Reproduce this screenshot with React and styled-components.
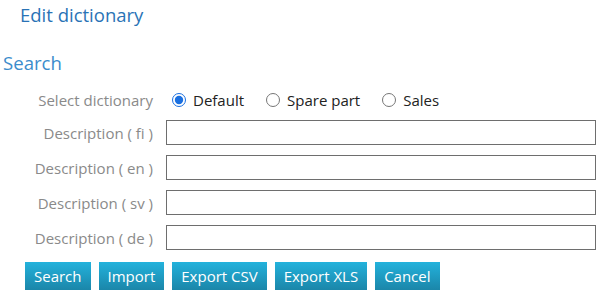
import React from "react";
import styled, { createGlobalStyle } from "styled-components";

const Global = createGlobalStyle`
  html, body { margin: 0; padding: 0; background: #fff; }
  body { font-family: "Open Sans", "Noto Sans", sans-serif; }
  * { box-sizing: border-box; }
`;

const Page = styled.div`
  width: 599px;
  height: 298px;
  overflow: hidden;
`;

const Title = styled.h1`
  margin: 0;
  padding: 3px 0 0 20px;
  font-size: 18.5px;
  line-height: 24px;
  font-weight: 400;
  color: #2a73b6;
`;

const Section = styled.h2`
  margin: 0;
  padding: 23px 0 0 3px;
  font-size: 18.6px;
  line-height: 26px;
  font-weight: 400;
  color: #3b8ccc;
`;

const Form = styled.div`
  display: grid;
  grid-template-columns: 153px 1fr;
  grid-template-rows: 20px repeat(4, 25px);
  column-gap: 13px;
  row-gap: 10px;
  padding: 14px 3px 0 0;
`;

const Label = styled.label`
  text-align: right;
  align-self: center;
  font-size: 15px;
  color: #8a8a8a;
  white-space: nowrap;
`;

const Radios = styled.div`
  display: flex;
  align-items: center;
  gap: 22px;
  padding-left: 6px;
`;

const RadioOpt = styled.label`
  display: flex;
  align-items: center;
  gap: 7px;
  font-size: 15px;
  color: #222;
`;

const Radio = styled.input`
  margin: 0;
  width: 14px;
  height: 14px;
  accent-color: #1a6fe0;
`;

const TextInput = styled.input`
  height: 25px;
  border: 1px solid #6e6e6e;
  padding: 0 4px;
  font-size: 14px;
`;

const Buttons = styled.div`
  display: flex;
  gap: 8px;
  padding: 12px 0 0 25px;
`;

const Button = styled.button`
  height: 28px;
  padding: 0 9px;
  border: none;
  border-radius: 0;
  background: linear-gradient(to bottom, #23b2dc, #1b86a9);
  color: #fff;
  font-family: inherit;
  font-size: 15px;
  cursor: pointer;
`;

const langs = ["fi", "en", "sv", "de"];

export default function App() {
  return (
    <Page>
      <Global />
      <Title>Edit dictionary</Title>
      <Section>Search</Section>
      <Form>
        <Label>Select dictionary</Label>
        <Radios>
          <RadioOpt><Radio type="radio" name="dict" defaultChecked /> Default</RadioOpt>
          <RadioOpt><Radio type="radio" name="dict" /> Spare part</RadioOpt>
          <RadioOpt><Radio type="radio" name="dict" /> Sales</RadioOpt>
        </Radios>
        {langs.map((l) => (
          <React.Fragment key={l}>
            <Label>Description ( {l} )</Label>
            <TextInput type="text" />
          </React.Fragment>
        ))}
      </Form>
      <Buttons>
        <Button>Search</Button>
        <Button>Import</Button>
        <Button>Export CSV</Button>
        <Button>Export XLS</Button>
        <Button>Cancel</Button>
      </Buttons>
    </Page>
  );
}
